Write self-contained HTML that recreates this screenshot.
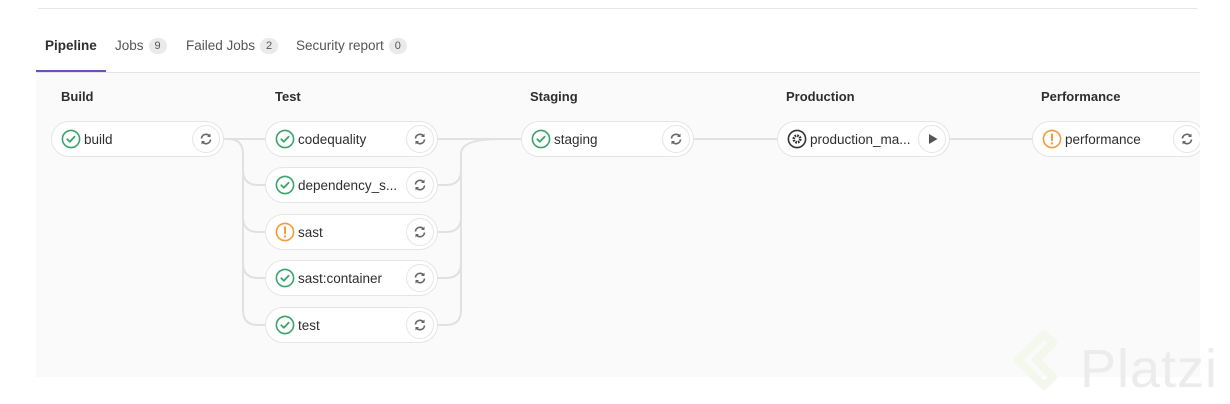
<!DOCTYPE html>
<html><head><meta charset="utf-8"><style>
*{box-sizing:border-box;margin:0;padding:0}
body{width:1230px;height:404px;background:#fff;font-family:"Liberation Sans",Arial,sans-serif;position:relative;overflow:hidden;color:#2e2e2e}
.topline{position:absolute;left:38px;top:8px;width:1159px;height:1px;background:#e5e5e5}
.tab{position:absolute;top:38px;font-size:13.5px;color:#555}
.badge{display:inline-block;background:#eaeaea;color:#555;border-radius:9px;font-size:11px;padding:2px 6px;margin-left:5px;vertical-align:1px}
.uline{position:absolute;left:36px;top:70px;width:70px;height:2px;background:#6b4fbb}
.panel{position:absolute;left:36px;top:72px;width:1164px;height:305px;background:#fafafa;border-top:1px solid #e5e5e5}
.hd{position:absolute;top:89px;font-size:13px;font-weight:bold;color:#2e2e2e}
.pill{position:absolute;width:173px;height:36px;background:#fff;border:1px solid #e5e5e5;border-radius:18px;font-size:13.5px;line-height:35px;padding-left:32px;white-space:nowrap}
.pill svg.st{position:absolute;left:9px;top:7px}
.rb{position:absolute;right:3px;top:3px;width:28px;height:28px;border:1px solid #e5e5e5;border-radius:50%;background:#fff}
.rb svg{position:absolute;left:6px;top:6px}
.wm{position:absolute;left:1080px;top:338px;font-size:54px;color:#ececec;letter-spacing:1px}
</style></head><body>
<div class="topline"></div>
<div class="tab" style="left:45px;color:#2e2e2e;font-weight:bold">Pipeline</div>
<div class="tab" style="left:115px">Jobs<span class="badge">9</span></div>
<div class="tab" style="left:186px">Failed Jobs<span class="badge">2</span></div>
<div class="tab" style="left:296px">Security report<span class="badge">0</span></div>
<div class="uline"></div>
<div class="panel"></div>
<svg style="position:absolute;left:0;top:0" width="1230" height="404" fill="none" stroke="#e1e1e1" stroke-width="2">
<path d="M224 139H265"/>
<path d="M228 139q15 0 15 15V310q0 15 15 15h7"/>
<path d="M243 170q0 15 15 15h7M243 217q0 15 15 15h7M243 263q0 15 15 15h7"/>
<path d="M438 139H521"/>
<path d="M500 139q-39 0 -39 15V310q0 15 -15 15h-8"/>
<path d="M461 170q0 15 -15 15h-8M461 217q0 15 -15 15h-8M461 263q0 15 -15 15h-8"/>
<path d="M694 139H777M950 139H1032"/>
</svg>
<div class="hd" style="left:61px">Build</div>
<div class="hd" style="left:275px">Test</div>
<div class="hd" style="left:530px">Staging</div>
<div class="hd" style="left:786px">Production</div>
<div class="hd" style="left:1041px">Performance</div>

<svg width="0" height="0" style="position:absolute">
<defs>
<symbol id="ok" viewBox="0 0 20 20"><circle cx="10" cy="10" r="8.6" fill="#fff" stroke="#3aa36b" stroke-width="1.6"/><path d="M6.3 10.2l2.5 2.5 4.8-5" stroke="#3aa36b" stroke-width="1.8" fill="none" stroke-linecap="round" stroke-linejoin="round"/></symbol>
<symbol id="warn" viewBox="0 0 20 20"><circle cx="10" cy="10" r="8.6" fill="#fff" stroke="#f29a3c" stroke-width="1.6"/><path d="M10 5.2v6" stroke="#f29a3c" stroke-width="2" stroke-linecap="round"/><circle cx="10" cy="14.4" r="1.2" fill="#f29a3c"/></symbol>
<symbol id="man" viewBox="0 0 20 20"><circle cx="10" cy="10" r="8.6" fill="#fff" stroke="#333" stroke-width="1.6"/><circle cx="10" cy="10" r="3.3" fill="none" stroke="#333" stroke-width="2.6" stroke-dasharray="1.7 0.9"/><circle cx="10" cy="10" r="1.4" fill="#fff"/></symbol>
<symbol id="rt" viewBox="0 0 14 14"><path d="M2.5 6.5a4.5 4.5 0 0 1 8-2.5M11.5 7.5a4.5 4.5 0 0 1-8 2.5" stroke="#666" stroke-width="1.6" fill="none"/><path d="M11.5 1.5v3.5H8z M2.5 12.5V9H6z" fill="#666"/></symbol>
</defs></svg>

<div class="pill" style="left:51px;top:121px"><svg class="st" width="20" height="20"><use href="#ok"/></svg>build<div class="rb"><svg width="14" height="14"><use href="#rt"/></svg></div></div>
<div class="pill" style="left:265px;top:121px"><svg class="st" width="20" height="20"><use href="#ok"/></svg>codequality<div class="rb"><svg width="14" height="14"><use href="#rt"/></svg></div></div>
<div class="pill" style="left:265px;top:167px"><svg class="st" width="20" height="20"><use href="#ok"/></svg>dependency_s...<div class="rb"><svg width="14" height="14"><use href="#rt"/></svg></div></div>
<div class="pill" style="left:265px;top:214px"><svg class="st" width="20" height="20"><use href="#warn"/></svg>sast<div class="rb"><svg width="14" height="14"><use href="#rt"/></svg></div></div>
<div class="pill" style="left:265px;top:260px"><svg class="st" width="20" height="20"><use href="#ok"/></svg>sast:container<div class="rb"><svg width="14" height="14"><use href="#rt"/></svg></div></div>
<div class="pill" style="left:265px;top:307px"><svg class="st" width="20" height="20"><use href="#ok"/></svg>test<div class="rb"><svg width="14" height="14"><use href="#rt"/></svg></div></div>
<div class="pill" style="left:521px;top:121px"><svg class="st" width="20" height="20"><use href="#ok"/></svg>staging<div class="rb"><svg width="14" height="14"><use href="#rt"/></svg></div></div>
<div class="pill" style="left:777px;top:121px"><svg class="st" width="20" height="20"><use href="#man"/></svg>production_ma...<div class="rb"><svg width="14" height="14"><path d="M4 2l8.5 5-8.5 5z" fill="#555"/></svg></div></div>
<div style="position:absolute;left:1032px;top:121px;width:168px;height:36px;overflow:hidden"><div class="pill" style="left:0;top:0"><svg class="st" width="20" height="20"><use href="#warn"/></svg>performance<div class="rb"><svg width="14" height="14"><use href="#rt"/></svg></div></div></div>

<svg style="position:absolute;left:1008px;top:328px" width="70" height="72" viewBox="0 0 70 72"><path d="M36 6L10 32l26 26 9-9-17-17 17-17z" fill="none" stroke="#f4f7ec" stroke-width="8" stroke-linejoin="round"/></svg>
<div class="wm">Platzi</div>
</body></html>
